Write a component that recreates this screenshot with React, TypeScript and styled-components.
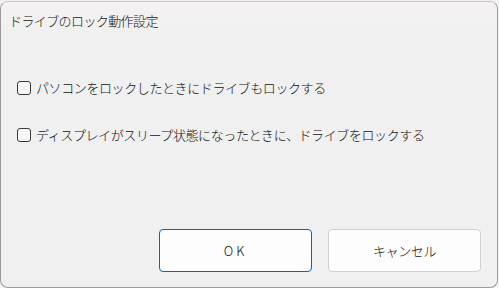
import styled, { createGlobalStyle } from 'styled-components';

const GlobalStyle = createGlobalStyle`
  html, body {
    margin: 0;
    padding: 0;
    background: #f2f0f0;
  }
  body {
    font-family: 'Noto Sans CJK JP', 'Noto Sans', sans-serif;
  }
`;

const Window = styled.div`
  box-sizing: border-box;
  width: 498px;
  height: 287px;
  margin-top: 1px;
  border: 1px solid #9a9a9a;
  border-top-color: #c8c8c8;
  border-radius: 8px;
  background: #f0f0f0;
  display: flex;
  flex-direction: column;
  overflow: hidden;
`;

const TitleBar = styled.div`
  height: 37px;
  display: flex;
  align-items: center;
  padding-left: 8px;
  background: linear-gradient(#f4f1f1, #f0f0f0);
`;

const Title = styled.span`
  font-size: 13px;
  font-weight: 300;
  letter-spacing: -0.6px;
  color: #111;
`;

const Options = styled.div`
  display: flex;
  flex-direction: column;
  gap: 28px;
  padding: 39px 0 0 16px;
`;

const OptionRow = styled.label`
  display: flex;
  align-items: center;
  gap: 5px;
  height: 19px;
  cursor: pointer;
`;

const Box = styled.span`
  box-sizing: border-box;
  width: 14px;
  height: 14px;
  border: 1px solid #3a3a3a;
  border-radius: 3px;
  background: #f7f7f7;
`;

const OptionText = styled.span`
  font-size: 13px;
  font-weight: 300;
  letter-spacing: -0.4px;
  color: #111;
`;

const Footer = styled.div`
  margin-top: auto;
  display: flex;
  justify-content: flex-end;
  gap: 16px;
  padding: 0 16px 15px 0;
`;

const Button = styled.button<{ $primary?: boolean }>`
  box-sizing: border-box;
  width: 153px;
  height: 43px;
  border: 1px solid ${(p) => (p.$primary ? '#0067c0' : '#d0d0d0')};
  border-radius: 4px;
  background: #fdfdfd;
  font-family: 'Noto Sans CJK JP', 'Noto Sans', sans-serif;
  font-size: 13px;
  font-weight: 300;
  letter-spacing: ${(p) => (p.$primary ? '3px' : '-0.4px')};
  color: #111;
  padding: 0;
`;

const options = [
  'パソコンをロックしたときにドライブもロックする',
  'ディスプレイがスリープ状態になったときに、ドライブをロックする',
];

export default function App() {
  return (
    <>
      <GlobalStyle />
      <Window>
        <TitleBar>
          <Title>ドライブのロック動作設定</Title>
        </TitleBar>
        <Options>
          {options.map((text) => (
            <OptionRow key={text}>
              <Box />
              <OptionText>{text}</OptionText>
            </OptionRow>
          ))}
        </Options>
        <Footer>
          <Button $primary>OK</Button>
          <Button>キャンセル</Button>
        </Footer>
      </Window>
    </>
  );
}
